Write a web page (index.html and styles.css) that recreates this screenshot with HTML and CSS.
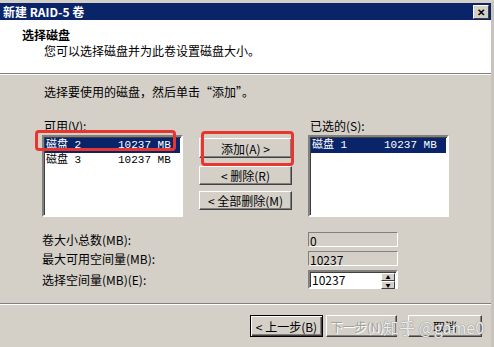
FILE: index.html
```html
<!DOCTYPE html>
<html lang="zh-CN">
<head>
    <meta charset="UTF-8">
    <title>新建 RAID-5 卷</title>
    <link rel="stylesheet" href="styles.css">
</head>
<body>
    <div class="window">
        <div class="titlebar">
            <span class="title">新建 RAID-5 卷</span>
            <span class="close">✕</span>
        </div>

        <div class="header">
            <div class="head-title">选择磁盘</div>
            <div class="head-sub">您可以选择磁盘并为此卷设置磁盘大小。</div>
        </div>

        <div class="content">
            <div class="intro">选择要使用的磁盘，然后单击“添加”。</div>

            <div class="pick">
                <div class="lbl">可用(V):</div>
                <div></div>
                <div class="lbl">已选的(S):</div>

                <div class="listbox">
                    <div class="row selected"><span class="disk">磁盘 2</span><span>10237 MB</span></div>
                    <div class="row"><span class="disk">磁盘 3</span><span>10237 MB</span></div>
                </div>
                <div class="actions">
                    <button class="btn add">添加(A) &gt;</button>
                    <button class="btn">&lt; 删除(R)</button>
                    <button class="btn">&lt; 全部删除(M)</button>
                </div>
                <div class="listbox">
                    <div class="row selected"><span class="disk">磁盘 1</span><span>10237 MB</span></div>
                </div>
            </div>

            <div class="sizes">
                <div class="lbl">卷大小总数(MB):</div>
                <div class="field ro">0</div>
                <div class="lbl">最大可用空间量(MB):</div>
                <div class="field ro">10237</div>
                <div class="lbl">选择空间量(MB)(E):</div>
                <div class="field spin">
                    <span>10237</span>
                    <span class="arrows"><i>▲</i><i>▼</i></span>
                </div>
            </div>

            <div class="mark mark-left"></div>
            <div class="mark mark-add"></div>
        </div>

        <div class="footer">
            <button class="btn default">&lt; 上一步(B)</button>
            <button class="btn disabled">下一步(N) &gt;</button>
            <button class="btn cancel">取消</button>
        </div>

        <div class="watermark">知乎 @game0</div>
    </div>
</body>
</html>
```

FILE: styles.css
```css
body {
    margin: 0;
    font-family: "Noto Sans CJK SC", "Liberation Sans", sans-serif;
    font-size: 12px;
    color: #000;
}

.window {
    width: 491px;
    height: 344px;
    background: #d4d0c8;
    border-top: 3px solid #d4d0c8;
    border-right: 3px solid #c8c4bc;
    display: flex;
    flex-direction: column;
    position: relative;
}

/* Title bar */
.titlebar {
    height: 17px;
    background: #0a246a;
    display: flex;
    align-items: center;
    justify-content: space-between;
    padding: 0 2px 0 3px;
}

.title {
    color: #fff;
    font-weight: bold;
    font-size: 12px;
    line-height: 14px;
}

.close {
    width: 14px;
    height: 12px;
    background: #d4d0c8;
    border: 1px solid;
    border-color: #fff #404040 #404040 #fff;
    font-size: 10px;
    font-weight: bold;
    line-height: 12px;
    text-align: center;
    color: #000;
}

/* Wizard header */
.header {
    height: 45px;
    background: #fff;
    padding: 8px 0 0 22px;
    border-bottom: 1px solid #808080;
    box-shadow: 0 1px 0 #fff;
}

.head-title {
    font-weight: bold;
    line-height: 14px;
}

.head-sub {
    margin: 2px 0 0 22px;
    line-height: 14px;
}

/* Body */
.content {
    height: 229px;
    padding: 0 0 0 42px;
    position: relative;
    border-bottom: 1px solid #808080;
    box-shadow: 0 1px 0 #fff;
}

.intro {
    margin: 11px 0 0 2px;
    line-height: 14px;
}

.pick {
    margin-top: 20px;
    display: grid;
    grid-template-columns: 141px 93px 141px;
    column-gap: 16px;
    row-gap: 2px;
}

.lbl {
    line-height: 14px;
    padding-left: 2px;
}

.listbox {
    height: 77px;
    background: #fff;
    border: 2px solid;
    border-color: #808080 #fff #fff #808080;
    box-shadow: inset 1px 1px #404040;
    padding: 1px 1px 0 1px;
    font-family: "Liberation Mono", "Noto Sans CJK SC", monospace;
    font-size: 11px;
}

.row {
    height: 15px;
    line-height: 15px;
    display: flex;
    padding-left: 1px;
}

.row .disk {
    width: 72px;
}

.row.selected {
    background: #0a246a;
    color: #fff;
}

.actions {
    display: flex;
    flex-direction: column;
    gap: 6px;
    padding-top: 3px;
}

.btn {
    font-family: inherit;
    font-size: 12px;
    background: #d4d0c8;
    border: 1px solid;
    border-color: #fff #404040 #404040 #fff;
    box-shadow: inset -1px -1px #808080;
    height: 19px;
    padding: 0;
    color: #000;
}

.actions .add {
    height: 20px;
    margin-bottom: 2px;
}

/* Size fields */
.sizes {
    margin-top: 15px;
    display: grid;
    grid-template-columns: 266px 90px;
    align-items: center;
    row-gap: 4px;
}

.sizes .lbl {
    padding-left: 0;
}

.field {
    height: 15px;
    line-height: 15px;
    border: 1px solid;
    border-color: #808080 #fff #fff #808080;
    padding-left: 1px;
    box-sizing: border-box;
}

.field.ro {
    background: #d4d0c8;
}

.field.spin {
    height: 19px;
    line-height: 16px;
    background: #fff;
    border-width: 2px;
    box-shadow: inset 1px 1px #404040;
    display: flex;
    justify-content: space-between;
    padding: 0 1px 0 2px;
}

.arrows {
    display: flex;
    flex-direction: column;
    width: 14px;
    padding-top: 1px;
}

.arrows i {
    font-style: normal;
    height: 6px;
    font-size: 5px;
    line-height: 6px;
    text-align: center;
    background: #d4d0c8;
    border: 1px solid;
    border-color: #fff #404040 #404040 #fff;
}

/* Red annotation boxes */
.mark {
    position: absolute;
    border: 3px solid #e8362f;
    border-radius: 4px;
}

.mark-left {
    left: 35px;
    top: 56px;
    width: 135px;
    height: 15px;
}

.mark-add {
    left: 201px;
    top: 57px;
    width: 87px;
    height: 29px;
}

/* Footer buttons */
.footer {
    display: flex;
    padding: 11px 0 0 250px;
}

.footer .btn {
    height: 22px;
}

.footer .default {
    width: 73px;
    border: 1px solid #000;
    box-shadow: inset 1px 1px #fff, inset -1px -1px #404040, inset -2px -2px #808080;
}

.footer .disabled {
    width: 71px;
    margin-left: 3px;
    color: #a0a0a0;
    text-shadow: 1px 1px #fff;
}

.footer .cancel {
    width: 74px;
    margin-left: 11px;
}

/* Site watermark laid over the footer */
.watermark {
    position: absolute;
    left: 383px;
    top: 314px;
    font-size: 16px;
    line-height: 20px;
    color: rgba(255, 255, 255, 0.85);
    text-shadow: 0 0 1px #888, 0 0 1px #888;
    white-space: nowrap;
}
```
